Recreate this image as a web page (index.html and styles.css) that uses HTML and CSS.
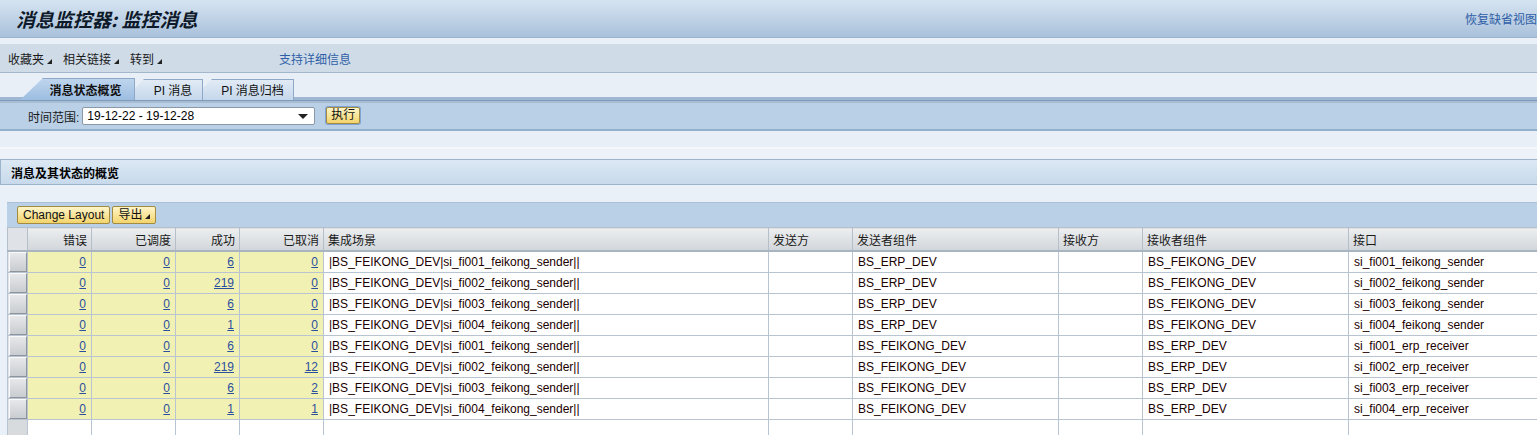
FILE: index.html
```html
<!DOCTYPE html>
<html lang="zh-CN">
<head>
    <meta charset="UTF-8">
    <title>消息监控器: 监控消息</title>
    <link rel="stylesheet" href="styles.css">
</head>
<body>

<!-- Título -->
<div class="titlebar">
    <h1>消息监控器: 监控消息</h1>
    <a class="restore" href="#">恢复缺省视图</a>
</div>

<!-- Menu -->
<div class="menubar">
    <span class="menu">收藏夹<i class="tri"></i></span>
    <span class="menu">相关链接<i class="tri"></i></span>
    <span class="menu">转到<i class="tri"></i></span>
    <a class="support" href="#">支持详细信息</a>
</div>

<!-- Abas -->
<div class="tabstrip">
    <div class="tab tab-active">消息状态概览</div>
    <div class="tab tab-pi">PI 消息</div>
    <div class="tab tab-archive">PI 消息归档</div>
</div>

<div class="filterbar">
    <label for="range">时间范围:</label>
    <div class="select" id="range">
        <span>19-12-22 - 19-12-28</span>
        <i class="down"></i>
    </div>
    <button class="btn btn-run">执行</button>
</div>

<div class="gap"></div>

<div class="section-head">消息及其状态的概览</div>

<div class="table-wrap">
    <div class="table-tools">
        <button class="btn">Change Layout</button>
        <button class="btn">导出<i class="tri"></i></button>
    </div>

    <table class="grid">
        <colgroup>
            <col style="width:20px">
            <col style="width:64px">
            <col style="width:84px">
            <col style="width:64px">
            <col style="width:84px">
            <col style="width:445px">
            <col style="width:84px">
            <col style="width:206px">
            <col style="width:84px">
            <col style="width:206px">
            <col style="width:200px">
        </colgroup>
        <thead>
            <tr>
                <th class="sel"></th>
                <th class="num">错误</th>
                <th class="num">已调度</th>
                <th class="num">成功</th>
                <th class="num">已取消</th>
                <th>集成场景</th>
                <th>发送方</th>
                <th>发送者组件</th>
                <th>接收方</th>
                <th>接收者组件</th>
                <th>接口</th>
            </tr>
        </thead>
        <tbody id="rows"></tbody>
    </table>
</div>

<script>
    const rows = [
        [0, 0, 6, 0, 'si_fi001_feikong_sender', 'BS_ERP_DEV', 'BS_FEIKONG_DEV', 'si_fi001_feikong_sender'],
        [0, 0, 219, 0, 'si_fi002_feikong_sender', 'BS_ERP_DEV', 'BS_FEIKONG_DEV', 'si_fi002_feikong_sender'],
        [0, 0, 6, 0, 'si_fi003_feikong_sender', 'BS_ERP_DEV', 'BS_FEIKONG_DEV', 'si_fi003_feikong_sender'],
        [0, 0, 1, 0, 'si_fi004_feikong_sender', 'BS_ERP_DEV', 'BS_FEIKONG_DEV', 'si_fi004_feikong_sender'],
        [0, 0, 6, 0, 'si_fi001_feikong_sender', 'BS_FEIKONG_DEV', 'BS_ERP_DEV', 'si_fi001_erp_receiver'],
        [0, 0, 219, 12, 'si_fi002_feikong_sender', 'BS_FEIKONG_DEV', 'BS_ERP_DEV', 'si_fi002_erp_receiver'],
        [0, 0, 6, 2, 'si_fi003_feikong_sender', 'BS_FEIKONG_DEV', 'BS_ERP_DEV', 'si_fi003_erp_receiver'],
        [0, 0, 1, 1, 'si_fi004_feikong_sender', 'BS_FEIKONG_DEV', 'BS_ERP_DEV', 'si_fi004_erp_receiver']
    ];

    const body = document.getElementById('rows');
    rows.forEach(r => {
        const tr = document.createElement('tr');
        tr.innerHTML =
            '<td class="sel"><span></span></td>' +
            r.slice(0, 4).map(n => `<td class="num"><a href="#">${n}</a></td>`).join('') +
            `<td>|BS_FEIKONG_DEV|${r[4]}||</td>` +
            `<td></td><td>${r[5]}</td><td></td><td>${r[6]}</td><td>${r[7]}</td>`;
        body.appendChild(tr);
    });

    // linha vazia no final
    const empty = document.createElement('tr');
    empty.className = 'empty';
    empty.innerHTML = '<td class="sel"></td>' + '<td></td>'.repeat(10);
    body.appendChild(empty);
</script>

</body>
</html>
```

FILE: styles.css
```css
body {
    margin: 0;
    font-family: "Liberation Sans", Arial, "Noto Sans CJK SC", sans-serif;
    font-size: 12px;
    color: #000;
    background-color: #e9f0f7;
    overflow: hidden;
    width: 1537px;
    height: 435px;
}
a {
    color: #2a4f9e;
}
.titlebar {
    height: 37px;
    display: flex;
    align-items: center;
    justify-content: space-between;
    background: linear-gradient(#d6e4f1, #a9c1db);
    border-bottom: 1px solid #9cb3cc;
    overflow: hidden;
}
.titlebar h1 {
    margin: 0 0 0 16px;
    font-family: "Noto Sans CJK SC", sans-serif;
    font-size: 19px;
    font-style: italic;
    font-weight: bold;
    color: #0e1a2a;
}
.restore {
    text-decoration: none;
    font-size: 12px;
    margin-right: 0;
    margin-top: -1px;
    color: #2f5ea6;
    white-space: nowrap;
}
.menubar {
    margin-top: 6px;
    height: 28px;
    display: flex;
    align-items: center;
    padding-left: 8px;
    background-color: #cfdce8;
    border-bottom: 1px solid #a4b6c9;
}
.menu {
    margin-right: 11px;
    color: #1a1a1a;
}
.tri {
    display: inline-block;
    width: 0;
    height: 0;
    margin-left: 3px;
    border-left: 5px solid transparent;
    border-bottom: 5px solid #222;
}
.support {
    margin-left: 106px;
    text-decoration: none;
    color: #2f5ea6;
}
.tabstrip {
    height: 27px;
    display: flex;
    align-items: flex-end;
    padding-left: 20px;
    background: linear-gradient(to bottom, #e8eff7 0, #e8eff7 24px, #9fb7d3 24px);
    border-bottom: 1px solid #7d9bbd;
}
.tab {
    height: 21px;
    display: flex;
    align-items: center;
    justify-content: center;
    color: #111;
    box-shadow: inset -1px 0 #8ea9c7, inset 0 1px #8ea9c7;
}
.tab-active {
    width: 115px;
    height: 22px;
    padding-left: 16px;
    box-sizing: border-box;
    font-weight: bold;
    background: linear-gradient(#c0d6ee, #9dbde1);
    clip-path: polygon(23px 0, 100% 0, 100% 100%, 0 100%);
}
.tab-pi,
.tab-archive {
    box-sizing: border-box;
    padding-left: 8px;
    background: linear-gradient(#e3ecf6, #c5d7eb);
    clip-path: polygon(0 100%, 0 9px, 9px 0, 100% 0, 100% 100%);
}
.tab-pi {
    width: 68px;
}
.tab-archive {
    width: 91px;
}
.filterbar {
    height: 26px;
    display: flex;
    align-items: center;
    padding-left: 28px;
    background-color: #b9d0e6;
    border-top: 2px solid #a8bcd2;
    border-bottom: 2px solid #92afcc;
}
.filterbar label {
    color: #1a1a1a;
    margin-right: 3px;
}
.select {
    width: 223px;
    height: 16px;
    display: flex;
    align-items: center;
    justify-content: space-between;
    padding: 0 4px;
    background-color: #fff;
    border: 1px solid #8a98a8;
    border-radius: 2px;
}
.down {
    width: 0;
    height: 0;
    margin-right: 2px;
    border-left: 5px solid transparent;
    border-right: 5px solid transparent;
    border-top: 5px solid #222;
}
.btn {
    font-family: "Liberation Sans", Arial, "Noto Sans CJK SC", sans-serif;
    font-size: 12px;
    height: 17px;
    padding: 0 5px;
    line-height: 15px;
    color: #111;
    background: linear-gradient(#fff5c8, #f3d46c);
    border: 1px solid #a48b42;
    border-radius: 2px;
    cursor: pointer;
}
.btn-run {
    margin-left: 11px;
    padding: 0 4px;
    margin-top: -2px;
    box-shadow: 0 0 0 1px #7ea3d6;
}
.gap {
    height: 28px;
    background: linear-gradient(to bottom, #e8eff7 0, #e8eff7 16px, #f4f7fb 16px, #f4f7fb 18px, #edf2f8 18px);
}
.section-head {
    height: 24px;
    display: flex;
    align-items: center;
    padding-left: 10px;
    font-weight: bold;
    background: linear-gradient(#dce8f4, #c7d9eb);
    border-top: 1px solid #9cb5cd;
    border-bottom: 1px solid #9cb5cd;
    border-left: 1px solid #9cb5cd;
}
.table-wrap {
    margin: 17px 0 0 7px;
}
.table-tools {
    height: 24px;
    display: flex;
    align-items: center;
    gap: 2px;
    padding-left: 10px;
    background-color: #b9d0e6;
    border-top: 1px solid #a9c0d8;
}
.table-tools .btn {
    height: 18px;
}
.grid {
    border-collapse: collapse;
    table-layout: fixed;
    width: 1541px;
}
.grid th {
    height: 22px;
    padding: 0 4px;
    text-align: left;
    font-weight: normal;
    color: #1a1a1a;
    background: linear-gradient(#eceef0, #d2d6da);
    border: 1px solid #b5bfca;
    border-bottom: 2px solid #a9b4c1;
    white-space: nowrap;
}
.grid td {
    height: 20px;
    padding: 0 5px;
    background-color: #fff;
    border: 1px solid #b8c4d2;
    white-space: nowrap;
    overflow: hidden;
    color: #1a0000;
}
.grid .num {
    text-align: right;
}
.grid td.num {
    background-color: #f2f1b4;
}
.grid .sel {
    padding: 0;
    background: #dfe3e8;
}
.grid td.sel span {
    display: block;
    height: 18px;
    margin: 0 0 0 1px;
    background: linear-gradient(#e6e8ea, #c9ccd0);
    border: 1px solid #8d949c;
    border-top-color: #fafafa;
    border-left-color: #fafafa;
}
.grid tr.empty td {
    height: 16px;
}
.grid tr.empty td.sel {
    background-color: #d8dbde;
}
```
